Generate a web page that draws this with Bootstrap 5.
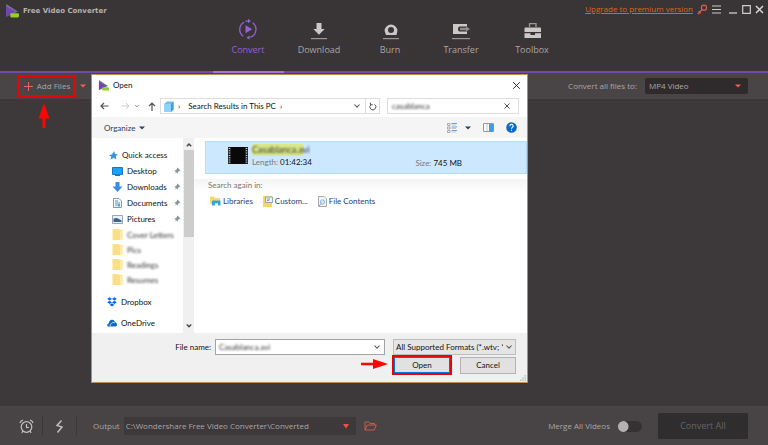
<!DOCTYPE html>
<html lang="en">
<head>
<meta charset="utf-8">
<meta name="viewport" content="width=device-width, initial-scale=1">
<title>Free Video Converter</title>
<link href="https://cdn.jsdelivr.net/npm/bootstrap@5.3.0/dist/css/bootstrap.min.css" rel="stylesheet">
<style>
  body { font-family: "Open Sans", "Noto Sans", sans-serif; font-size: 9px; line-height: 12px; background: #3d393a; color: #aaa6a6; }
  svg { display: block; flex: none; }
  button, select, input { font: inherit; color: inherit; }
  .plain-btn { background: none; border: 0; padding: 0; }
  .app-head { background: #393435; border-bottom: 2px solid #7449ad; }
  .app-title { font-family: "DejaVu Sans", sans-serif; font-size: 7px; font-weight: 700; color: #b5b1b1; }
  .title-row { height: 18px; padding: 0 4px 0 5px; }
  .upgrade { color: #d9681c; font-size: 8px; }
  .main-tabs { padding-left: 12px; }
  .main-tab { width: 71px; height: 55px; color: #aaa6a6; text-decoration: none; margin-bottom: -2px; border-bottom: 2px solid transparent; }
  .main-tab.current { color: #9560d8; border-color: #a274e6; }
  .tool-strip { background: #494546; height: 26px; padding-left: 18px; padding-right: 20px; }
  .add-btn { border: 2px solid #e30707; width: 58px; height: 22px; font-size: 8px; }
  .add-more { color: #ee6352; }
  .small-text { font-size: 8px; }
  .stack { display: grid; align-items: center; }
  .stack > * { grid-area: 1 / 1; }
  .stack > svg { justify-self: end; pointer-events: none; }
  .stack select { appearance: none; border: 0; border-radius: 2px; width: 100%; }
  .fmt { width: 103px; }
  .fmt select { background: #2f2b2c; height: 16px; padding: 0 4px; }
  .fmt svg, .out svg { margin-right: 7px; }
  .app-foot { background: #484344; height: 39px; padding: 1px 20px 0 19px; }
  .foot-sep { width: 1px; height: 20px; background: #3b3738; }
  .out { width: 232px; }
  .out select { background: #3d393a; height: 18px; padding: 0 2px; }
  .form-switch .form-check-input.merge { width: 24px; height: 11px; margin: 0; float: none; background-color: #363233; border: 0; box-shadow: none; background-image: radial-gradient(circle at 5px 50%, #b5b1b1 0 5px, transparent 6px); background-position: left; }
  .convert-all { width: 90px; height: 26px; background: #2f2d2e; color: #696566; border: 0; border-radius: 1px; font-size: 9px; }

  .dlg { position: absolute; left: 91px; top: 74px; width: 437px; border: 1px solid #b98f55; background: #fff; color: #111; font-family: Lato, "Open Sans", sans-serif; font-size: 8px; line-height: 12px; }
  .dlg-title { height: 20px; padding: 0 6px; }
  .nav-row { height: 22px; padding: 0 8px; }
  .addr { border: 1px solid #ddd; height: 16px; width: 220px; padding-left: 2px; }
  .reload { border-left: 1px solid #ddd; width: 14px; height: 14px; }
  .find { border: 1px solid #ddd; height: 16px; width: 132px; }
  .find input { border: 0; outline: 0; background: none; min-width: 0; padding: 0 4px; }
  .cmd-row { background: #f5f5f5; height: 21px; padding: 0 10px 0 12px; color: #2c4162; }
  .side { width: 91px; padding-top: 9px; }
  .side a { color: #111; text-decoration: none; height: 16px; display: flex; align-items: center; gap: 4px; padding-left: 20px; padding-right: 2px; }
  .side a.top { padding-left: 17px; }
  .side a.cloud { height: 21px; padding-left: 15px; }
  .side a.dir { height: 15px; }
  .scroller { width: 11px; background: #f0f0f0; padding: 4px 0; }
  .thumb { width: 10px; height: 87px; background: #cdcdcd; margin-top: 2px; }
  .dlg .soft { filter: blur(1px); color: #333; }
  .pane { padding-top: 3px; }
  .result { background: #cce8ff; border: 1px solid #b5dcfb; height: 33px; margin-left: 11px; padding: 0 64px 4px 22px; }
  .mark-name { background: #dbe888; border-radius: 3px; width: 52px; height: 12px; white-space: nowrap; font-size: 9px; }
  .dim { color: #74797f; }
  .again { margin-top: 5px; background: linear-gradient(#f5f5f5, #fff); height: 14px; padding-left: 14px; color: #777; }
  .again-links { padding: 2px 0 0 16px; gap: 10px; }
  .again-links a { color: #26416f; text-decoration: none; display: flex; align-items: center; gap: 2px; }
  .dlg-foot { background: #f0f0f0; padding: 6px 11px 0 11px; height: 49px; }
  .name-box { width: 170px; height: 16px; border: 1px solid #a3a3a3; background: #fff; }
  .name-box input { border: 0; outline: 0; background: none; width: 150px; padding: 0 3px; }
  .type-box { width: 123px; }
  .type-box select { background: #e5e5e5; border: 1px solid #bdbdbd; height: 16px; padding: 0 12px 0 2px; border-radius: 0; }
  .name-box svg, .type-box svg { margin-right: 3px; }
  .ok-ring { border: 2px solid #e30707; width: 60px; height: 20px; }
  .ok-btn { background: #e1e1e1; border: 1px solid #0078d7; width: 100%; height: 16px; padding: 0; line-height: 12px; }
  .no-btn { background: #e1e1e1; border: 1px solid #b2b2b2; width: 56px; height: 17px; padding: 0; line-height: 12px; }
  .hint-up { position: absolute; left: 38px; top: 103px; }
  .hint-right { position: absolute; left: 269px; bottom: 12px; }
  .grip { position: absolute; right: 1px; bottom: 1px; }
</style>
<script src="https://cdn.jsdelivr.net/npm/bootstrap@5.3.0/dist/js/bootstrap.bundle.min.js"></script>
</head>
<body>
<svg width="0" height="0" class="position-absolute" aria-hidden="true">
  <symbol id="logo" viewBox="0 0 12 12"><path d="M1 0L11 6.5 1 11Z" fill="#77758a"/><path d="M1 2L9 6.5 1 11Z" fill="#7342b8"/><rect x="4.5" y="8" width="7.5" height="3.5" rx="1" fill="#93cf27"/></symbol>
  <symbol id="caret" viewBox="0 0 6 4"><path d="M0 0.5H6L3 3.5Z" fill="currentColor"/></symbol>
  <symbol id="chev" viewBox="0 0 8 8"><path d="M1.5 2.5L4 5.2 6.5 2.5" fill="none" stroke="currentColor" stroke-width="1.1"/></symbol>
  <symbol id="pin" viewBox="0 0 8 8"><path d="M4.5 0.5L7.5 3.5 6.8 4 6.2 3.8 4.8 5.2 4.8 6.8 3 5.2 0.5 7.5 2.8 5 1.2 3.3 2.8 3.2 4.2 1.8 4 1.2Z" fill="#8b949c"/></symbol>
  <symbol id="dir" viewBox="0 0 11 11"><path d="M0.5 0H6.5L7.5 1H10.5V11H0.5Z" fill="#fbdf86"/><path d="M8 2H10.5V11H8Z" fill="#fcecb4"/></symbol>
</svg>
<div class="d-flex flex-column min-vh-100 position-relative overflow-hidden">
  <header class="app-head">
    <div class="title-row d-flex align-items-center">
      <div class="d-flex align-items-center mt-1"><svg width="14" height="14"><use href="#logo"/></svg>
      <span class="app-title ms-1">Free Video Converter</span></div>
      <a href="#" class="upgrade ms-auto">Upgrade to premium version</a>
      <button class="plain-btn ms-1" aria-label="Register"><svg width="11" height="11" viewBox="0 0 9 9" fill="none" stroke="#d9604f"><circle cx="5.7" cy="3" r="2.1"/><path d="M4 4.700L.6 8.200M1.300 6L3 7.800"/></svg></button>
      <button class="plain-btn ms-1" aria-label="Menu"><svg width="9" height="9" viewBox="0 0 9 9" stroke="#cfcccc"><path d="M0 1H9M0 4.500H9M0 8H9"/></svg></button>
      <button class="plain-btn ms-2" aria-label="Minimize"><svg width="9" height="9" viewBox="0 0 9 9" stroke="#cfcccc"><path d="M0 8H8" stroke-width="1.3"/></svg></button>
      <button class="plain-btn ms-1" aria-label="Maximize"><svg width="9" height="9" viewBox="0 0 9 9" stroke="#cfcccc" fill="none"><path d="M.7 .7H8.300V8.300H.7Z" stroke-width="1.2"/></svg></button>
      <button class="plain-btn ms-1" aria-label="Close"><svg width="9" height="9" viewBox="0 0 9 9" stroke="#d8d5d5"><path d="M1 1L8 8M8 1L1 8" stroke-width="1.5"/></svg></button>
    </div>
    <nav class="main-tabs d-flex justify-content-center">
      <a href="#" class="main-tab current d-flex flex-column align-items-center"><svg width="20" height="22" viewBox="0 0 20 22" fill="none" stroke="#9560d8" stroke-width="1.3"><path d="M6 4.2A8.3 8.3 0 0 0 5.2 18.2M7.5 3.4A8.3 8.3 0 0 1 11 3M14.8 4.8A8.3 8.3 0 0 1 12.3 19.2M9 19.6L11.5 19.6"/><path d="M10 .8L13 3 10 5.2ZM11.5 17.4V21.6L8.5 19.6Z" fill="#9560d8" stroke="none"/><path d="M7.5 7.2L14.3 11.2 7.5 15.2Z" fill="#9560d8" stroke="none"/></svg><span class="mt-1">Convert</span></a>
      <a href="#" class="main-tab d-flex flex-column align-items-center"><svg width="20" height="22" viewBox="0 0 20 22" fill="#cbc8c8"><path d="M7.5 5H12.5V11H15.7L10 16.8 4.3 11H7.5Z"/><path d="M2 20H18V21.2H2Z" fill="#999"/></svg><span class="mt-1">Download</span></a>
      <a href="#" class="main-tab d-flex flex-column align-items-center"><svg width="20" height="22" viewBox="0 0 20 22" fill="#cbc8c8"><path fill-rule="evenodd" d="M6 17L4.6 13A6.3 6.3 0 1 1 17.4 13L16.5 17ZM11 9A3 3 0 1 0 11 15 3 3 0 0 0 11 9Z"/><path d="M3 20H19V21.2H3Z" fill="#999"/></svg><span class="mt-1">Burn</span></a>
      <a href="#" class="main-tab d-flex flex-column align-items-center"><svg width="20" height="22" viewBox="0 0 20 22"><path d="M2 6H16V8.5H8.5Q7 8.500 7 11T8.500 13.500H16V16H2Z" fill="#cbc8c8"/><path d="M9 9.800H15V8.200L19 11 15 13.800V12.200H9Z" fill="#8f8c8c"/><path d="M1 20H19V21.200H1Z" fill="#999"/></svg><span class="mt-1">Transfer</span></a>
      <a href="#" class="main-tab d-flex flex-column align-items-center"><svg width="20" height="22" viewBox="0 0 20 22" fill="#cbc8c8"><path d="M7.500 9V5.700H14V9" fill="none" stroke="#999" stroke-width="1.300"/><path d="M3.500 9.500H18Q19 9.500 19 10.500V14H2.500V10.500Q2.500 9.500 3.500 9.500ZM2.500 15.200H8.500V17H13V15.200H19V20H2.500Z"/></svg><span class="mt-1">Toolbox</span></a>
    </nav>
  </header>

  <div class="tool-strip d-flex align-items-center">
    <button class="plain-btn add-btn d-flex align-items-center justify-content-center gap-1"><svg width="9" height="9" viewBox="0 0 9 9" stroke="#e5695b"><path d="M0 4.500H9M4.500 0V9"/></svg><span>Add Files</span></button>
    <button class="plain-btn add-more ms-1" aria-label="More add options"><svg width="6" height="4"><use href="#caret"/></svg></button>
    <label for="fmt" class="small-text ms-auto me-2">Convert all files to:</label>
    <div class="fmt stack small-text"><select id="fmt"><option>MP4 Video</option></select><svg width="6" height="4" color="#ee6352"><use href="#caret"/></svg></div>
  </div>

  <main class="flex-grow-1"></main>

  <footer class="app-foot d-flex align-items-center small-text">
    <button class="plain-btn" aria-label="Schedule"><svg width="15" height="15" viewBox="0 0 15 15" fill="none" stroke="#c4c1c1" stroke-width="1.200"><circle cx="7.500" cy="8" r="5.300"/><path d="M7.500 5V8.500H10M1 4Q1.500 1.800 4 1.200M14 4Q13.500 1.800 11 1.200M4 12L2.800 13.800M11 12L12.200 13.800"/></svg></button>
    <span class="foot-sep ms-2"></span>
    <button class="plain-btn mx-2 px-1" aria-label="High speed"><svg width="9" height="13" viewBox="0 0 9 13" fill="none" stroke="#c4c1c1" stroke-width="1.400"><path d="M6.500 .5L2 5.500 7 7 2.500 12.500"/></svg></button>
    <span class="foot-sep"></span>
    <label for="out" class="ms-3">Output</label>
    <div class="out stack ms-1"><select id="out"><option>C:\Wondershare Free Video Converter\Converted</option></select><svg width="6" height="6" viewBox="0 0 6 6"><path d="M0 1H6L3 5.500Z" fill="#f0523e"/></svg></div>
    <button class="plain-btn ms-2" aria-label="Open output folder"><svg width="13" height="10" viewBox="0 0 13 10" fill="none" stroke="#c95a4d"><path d="M1 9V1H5L6 2.500H10.500V4M1 9L3.300 4H12.300L10.300 9Z"/></svg></button>
    <div class="form-check form-switch d-flex align-items-center flex-row-reverse p-0 m-0 ms-auto gap-2 me-3"><input class="form-check-input merge" type="checkbox" role="switch" id="merge"><label for="merge">Merge All Videos</label></div>
    <button class="convert-all">Convert All</button>
  </footer>

  <svg class="hint-up" width="12" height="26" viewBox="0 0 12 26" fill="#fb0505"><path d="M6 0L11.500 15.500H7.500V25H4.500V15.500H.5Z"/></svg>

  <section class="dlg" role="dialog" aria-label="Open">
    <div class="dlg-title d-flex align-items-center"><svg width="11" height="11"><use href="#logo"/></svg><span class="ms-1">Open</span>
      <button class="plain-btn ms-auto" aria-label="Close dialog"><svg width="9" height="9" viewBox="0 0 9 9" stroke="#333"><path d="M1.200 1.200L7.800 7.800M7.800 1.200L1.200 7.800"/></svg></button></div>
    <div class="nav-row d-flex align-items-center">
      <button class="plain-btn" aria-label="Back"><svg width="9" height="8" viewBox="0 0 9 8" fill="none" stroke="#555"><path d="M8.500 4H1M4 1L1 4 4 7" stroke-width="1.200"/></svg></button>
      <button class="plain-btn ms-2 ps-1" aria-label="Forward"><svg width="9" height="8" viewBox="0 0 9 8" fill="none" stroke="#ccc"><path d="M.5 4H8M5 1L8 4 5 7"/></svg></button>
      <button class="plain-btn ms-1" aria-label="Recent"><svg width="6" height="6" color="#777"><use href="#chev"/></svg></button>
      <button class="plain-btn ms-2" aria-label="Up"><svg width="8" height="9" viewBox="0 0 8 9" fill="none" stroke="#555"><path d="M4 9V1M1 4L4 1 7 4" stroke-width="1.200"/></svg></button>
      <div class="addr d-flex align-items-center ms-1"><svg width="11" height="11" viewBox="0 0 11 11"><path d="M1 3L4 .5H10.500V8.500L8 11H1Z" fill="#6dc0f0"/><path d="M1 3H8V11H1Z" fill="#8fd4f8"/><path d="M8 3L10.500 .5V8.500L8 11Z" fill="#3c9edb"/></svg>
        <span class="ms-1">›</span><span class="ms-2">Search Results in This PC</span><span class="ms-1">›</span>
        <button class="plain-btn ms-auto me-1" aria-label="Previous locations"><svg width="8" height="8" color="#555"><use href="#chev"/></svg></button>
        <button class="plain-btn reload d-flex align-items-center justify-content-center" aria-label="Refresh"><svg width="8" height="9" viewBox="0 0 8 9" fill="none" stroke="#555"><path d="M2 2.500A3 3 0 1 0 5.500 2.300M1.500 .7V2.800H3.700"/></svg></button></div>
      <div class="find d-flex align-items-center ms-auto"><input class="flex-grow-1 soft" aria-label="Search" value="casablanca"><button class="plain-btn me-2" aria-label="Clear search"><svg width="6" height="6" viewBox="0 0 6 6" stroke="#555"><path d="M.5 .5L5.500 5.500M5.500 .5L.5 5.500"/></svg></button></div>
    </div>
    <div class="cmd-row d-flex align-items-center">
      <button class="plain-btn d-flex align-items-center gap-1">Organize <svg width="6" height="4"><use href="#caret"/></svg></button>
      <button class="plain-btn ms-auto d-flex align-items-center gap-2" aria-label="Change view"><svg width="10" height="10" viewBox="0 0 10 10"><path d="M.5 .5H3V2.500H.5ZM.5 4H3V6H.5ZM.5 7.500H3V9.500H.5Z" fill="none" stroke="#9a9a9a" stroke-width=".8"/><path d="M4.500 .5H10M4.500 4H10M4.500 7.500H10" stroke="#6ba1dc"/><path d="M4.500 2H9M4.500 5.500H9M4.500 9H9" stroke="#b3bfcc" stroke-width=".8"/></svg><svg width="6" height="4"><use href="#caret"/></svg></button>
      <button class="plain-btn ms-2 ps-1" aria-label="Preview pane"><svg width="11" height="9" viewBox="0 0 11 9"><path d="M.5 .5H10.500V8.500H.5Z" fill="#fff" stroke="#8d99a5"/><path d="M4 1V8" stroke="#aaa" stroke-width=".7"/><path d="M6 1H10.500V8.500H6Z" fill="#3f9ce6"/></svg></button>
      <button class="plain-btn ms-2 ps-1" aria-label="Help"><svg width="11" height="11" viewBox="0 0 11 11"><circle cx="5.500" cy="5.500" r="5.300" fill="#0a6acb"/><path d="M3.900 4.200A1.650 1.650 0 1 1 6.300 5.400Q5.500 5.800 5.500 6.700M5.500 7.700V8.800" fill="none" stroke="#fff" stroke-width="1.100"/></svg></button>
    </div>
    <div class="d-flex">
      <nav class="side" aria-label="Places">
        <a href="#" class="top"><svg width="9" height="9" viewBox="0 0 9 9"><path d="M5 0L6 3 9 3.200 6.700 5.200 7.500 8.500 4.600 6.800 1.500 8.800 2.300 5.600 0 4.300 3.200 3.300Z" fill="#3393df"/></svg>Quick access</a>
        <a href="#"><svg width="11" height="9" viewBox="0 0 11 9"><path d="M.5 .5H10.500V7.500H.5Z" fill="#1ea1f7" stroke="#1479c6"/><path d="M3 8.500H8" stroke="#1479c6"/></svg>Desktop<svg class="ms-auto" width="8" height="8"><use href="#pin"/></svg></a>
        <a href="#"><svg width="11" height="10" viewBox="0 0 11 10"><path d="M3.500 0H7.500V4.500H10.500L5.500 10 .5 4.500H3.500Z" fill="#3a8ddd"/></svg>Downloads<svg class="ms-auto" width="8" height="8"><use href="#pin"/></svg></a>
        <a href="#"><svg width="11" height="10" viewBox="0 0 11 10"><path d="M1.500 .5H7L9.500 3V9.500H1.500Z" fill="#f5f9fc" stroke="#8e9aa5"/><path d="M3 3H6M3 5H8M3 7H5" stroke="#5a9ac9"/><path d="M5.500 6H8V8.500H5.500Z" fill="#5aa5de"/></svg>Documents<svg class="ms-auto" width="8" height="8"><use href="#pin"/></svg></a>
        <a href="#"><svg width="11" height="9" viewBox="0 0 11 9"><path d="M.5 .5H10.500V8.500H.5Z" fill="#e8f0f6" stroke="#9ba6ae"/><path d="M1.500 3.500L5 3 9.500 5.500V7H1.500Z" fill="#39668f"/></svg>Pictures<svg class="ms-auto" width="8" height="8"><use href="#pin"/></svg></a>
        <a href="#" class="dir"><svg width="11" height="11"><use href="#dir"/></svg><span class="soft">Cover Letters</span></a>
        <a href="#" class="dir"><svg width="11" height="11"><use href="#dir"/></svg><span class="soft">Pics</span></a>
        <a href="#" class="dir"><svg width="11" height="11"><use href="#dir"/></svg><span class="soft">Readings</span></a>
        <a href="#" class="dir"><svg width="11" height="11"><use href="#dir"/></svg><span class="soft">Resumes</span></a>
        <a href="#" class="cloud mt-1"><svg width="10" height="10" viewBox="0 0 10 10" fill="#0a66f5"><path d="M2.600 .3L5 1.900 2.600 3.500 .2 1.900ZM7.400 .3L9.800 1.900 7.400 3.500 5 1.900ZM2.600 3.700L5 5.300 2.600 6.900 .2 5.300ZM7.400 3.700L9.800 5.300 7.400 6.900 5 5.300ZM5 6.200L7.400 7.800 5 9.500 2.600 7.800Z"/></svg>Dropbox</a>
        <a href="#" class="cloud"><svg width="10" height="8" viewBox="0 0 10 8"><path d="M.5 7.500Q-.3 5 1.800 4.300 2.200 1 5 .8 7 .6 8 3 10 3.500 10 5.500T8.500 7.500Z" fill="#0b6bc7"/><path d="M3.200 7.500Q2.500 5 4.500 4.500 5.500 2.500 7.800 3.800" fill="none" stroke="#fff" stroke-width=".7"/></svg>OneDrive</a>
      </nav>
      <div class="scroller d-flex flex-column align-items-center" aria-hidden="true">
        <svg width="8" height="6" viewBox="0 0 8 6"><path d="M1.800 4.200L4 2 6.200 4.200" fill="none" stroke="#444" stroke-width="1.400"/></svg>
        <div class="thumb"></div>
        <svg class="mt-auto" width="8" height="6" viewBox="0 0 8 6"><path d="M1.800 1.500L4 3.700 6.200 1.500" fill="none" stroke="#444" stroke-width="1.400"/></svg>
      </div>
      <div class="pane flex-grow-1">
        <div class="result d-flex align-items-center">
          <svg width="20" height="17" viewBox="0 0 20 17"><path d="M0 0H20V17H0Z" fill="#1b1d20"/><path d="M1.500 1V17M18.500 1V17" stroke="#c7d6e2" stroke-width="1.500" stroke-dasharray="1 1.300"/><path d="M3 0H17V17H3Z" fill="#090909"/></svg>
          <div class="ms-1"><div class="mark-name"><span class="soft d-inline-block">Casablanca.avi</span></div><div><span class="dim">Length:</span> 01:42:34</div></div>
          <div class="ms-auto align-self-end"><span class="dim">Size:</span> 745 MB</div>
        </div>
        <div class="again">Search again in:</div>
        <div class="again-links d-flex">
          <a href="#"><svg width="11" height="10" viewBox="0 0 11 10"><path d="M0 .5H4L5 2H10V8H0Z" fill="#f7d775"/><path d="M2 9.500V4.500H10.500V9.500H8V7H5V9.500Z" fill="#32a7dc"/></svg>Libraries</a>
          <a href="#"><svg width="10" height="11" viewBox="0 0 10 11"><path d="M0 0H9V11H0Z" fill="#f6d36b"/><path d="M2.500 1H9.500V6.500H2.500Z" fill="#eef5fc" stroke="#7d93ab" stroke-width=".8"/><path d="M4 3H7M4 4.500H6" stroke="#4b83c4" stroke-width=".8"/></svg>Custom...</a>
          <a href="#"><svg width="9" height="11" viewBox="0 0 9 11"><path d="M.5 .5H6L8.500 3V10.500H.5Z" fill="#f5f5f5" stroke="#aaa"/><circle cx="4.500" cy="6" r="2.200" fill="#c9e6f8" stroke="#7fb3d6" stroke-width=".8"/><path d="M3 7.500L1 10" stroke="#8d9fb0"/></svg><span>File Contents</span></a>
        </div>
      </div>
    </div>
    <div class="dlg-foot">
      <div class="d-flex align-items-center justify-content-end">
        <label for="fname" class="me-1">File name:</label>
        <div class="name-box stack"><input id="fname" class="soft" value="Casablanca.avi"><svg width="8" height="8" color="#555"><use href="#chev"/></svg></div>
        <div class="type-box stack ms-2"><select aria-label="File type"><option>All Supported Formats (*.wtv; *</option></select><svg width="8" height="8" color="#555"><use href="#chev"/></svg></div>
      </div>
      <div class="d-flex align-items-center justify-content-end gap-2">
        <div class="ok-ring"><button class="ok-btn d-block">Open</button></div>
        <button class="no-btn">Cancel</button>
      </div>
    </div>
    <svg class="hint-right" width="28" height="12" viewBox="0 0 28 12" fill="#fb0505"><path d="M0 4.700H12V1L27 6 12 11V7.300H0Z"/></svg>
    <svg class="grip" width="6" height="6" viewBox="0 0 6 6"><path d="M4.500 0H6V1.500H4.500ZM2.300 2.200H3.800V3.700H2.300ZM4.500 2.200H6V3.700H4.500ZM0 4.500H1.500V6H0ZM2.300 4.500H3.800V6H2.300ZM4.500 4.500H6V6H4.500Z" fill="#c2c2c2"/></svg>
  </section>
</div>
</body>
</html>
